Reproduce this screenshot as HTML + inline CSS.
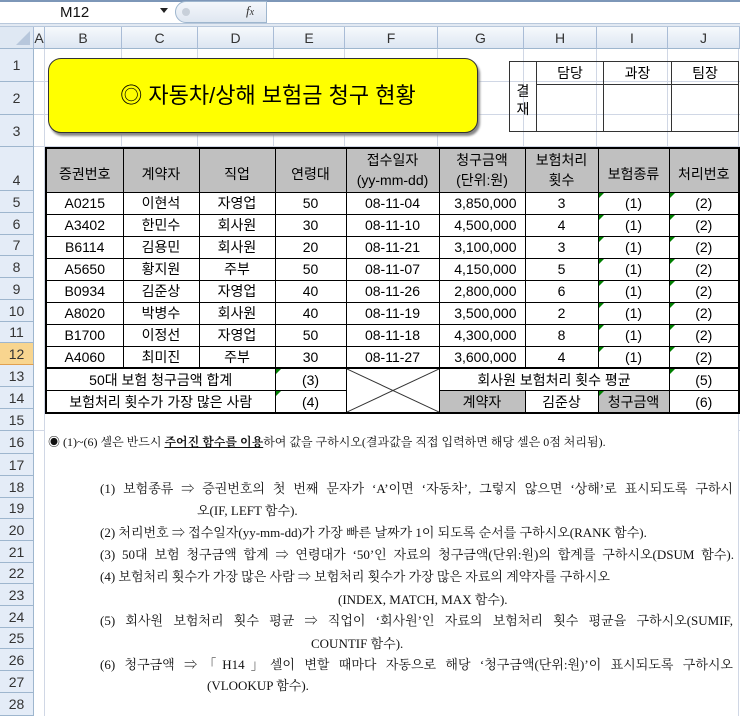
<!DOCTYPE html>
<html><head><meta charset="utf-8"><style>
*{margin:0;padding:0;box-sizing:border-box}
body{width:740px;height:716px;overflow:hidden;background:#fff;position:relative;font-family:"Liberation Sans","Noto Sans CJK KR",sans-serif;color:#000}
.a{position:absolute}
.vl{position:absolute;width:1px;background:#d0d7e5}
.hl{position:absolute;height:1px;background:#d0d7e5}
.ch{position:absolute;top:27px;height:22px;font-size:14px;color:#333;text-align:center;line-height:22px;background:linear-gradient(#f6f9fc,#dde6f2);border-right:1px solid #a9bcd6;border-bottom:1px solid #9eb6ce}
.rh{position:absolute;left:0;width:34px;font-size:14px;color:#333;text-align:center;background:#e4ecf7;border-bottom:1px solid #9eb6ce;border-right:1px solid #9eb6ce;display:flex;align-items:center;justify-content:center}
table.m{position:absolute;left:45px;top:147px;border-collapse:collapse;font-size:14px;background:#fff}
table.m td{border:1px solid #000;text-align:center;padding:0;height:22px;line-height:20px;position:relative;white-space:nowrap}
table.m{border:2px solid #000}
.g{background:#c0c0c0}
.tri::before{content:"";position:absolute;left:0;top:0;border-top:5px solid #008000;border-right:5px solid transparent}
.t{position:absolute;font-family:"Liberation Serif","Noto Serif CJK KR","Noto Serif CJK SC",serif;font-size:13px;white-space:nowrap;color:#111}
.j{text-align:justify;text-align-last:justify}
</style></head><body>
<!-- formula bar -->
<div class="a" style="left:0;top:0;width:740px;height:2px;background:#7d97b8"></div>
<div class="a" style="left:0;top:2px;width:740px;height:22px;background:#fff"></div>
<div class="a" style="left:60px;top:4px;font-size:15px;color:#111">M12</div>
<div class="a" style="left:160px;top:8px;border-top:5px solid #222;border-left:4px solid transparent;border-right:4px solid transparent"></div>
<div class="a" style="left:175px;top:1px;width:92px;height:22px;border:1px solid #9eb6ce;border-radius:11px 0 0 11px;background:linear-gradient(#f4f7fb,#dfe7f1)"></div>
<div class="a" style="left:182px;top:8px;width:8px;height:8px;border-radius:50%;background:#c8d0da"></div>
<div class="a" style="left:246px;top:3px;font-size:13px;font-style:italic;font-family:'Liberation Serif',serif;color:#333">f<span style="font-size:10px">x</span></div>
<div class="a" style="left:0;top:23px;width:740px;height:4px;background:#e2e9f2;border-top:1px solid #b8c8dc;border-bottom:1px solid #b8c8dc"></div>
<!-- grid lines -->
<div class="vl" style="left:44px;top:49px;height:667px"></div>
<div class="vl" style="left:121px;top:49px;height:100px"></div>
<div class="vl" style="left:197px;top:49px;height:100px"></div>
<div class="vl" style="left:273px;top:49px;height:100px"></div>
<div class="vl" style="left:344px;top:49px;height:100px"></div>
<div class="vl" style="left:437px;top:49px;height:100px"></div>
<div class="vl" style="left:523px;top:49px;height:100px"></div>
<div class="vl" style="left:596px;top:49px;height:100px"></div>
<div class="vl" style="left:667px;top:49px;height:100px"></div>
<div class="vl" style="left:738px;top:49px;height:667px"></div>
<div class="hl" style="left:34px;top:81px;width:706px"></div>
<div class="hl" style="left:34px;top:114px;width:706px"></div>
<div class="hl" style="left:34px;top:146px;width:706px"></div>
<div class="hl" style="left:34px;top:430px;width:706px"></div>
<!-- col headers -->
<div class="ch" style="left:0;width:34px;background:#dfe8f3"><div class="a" style="right:3px;bottom:3px;border-bottom:14px solid #b7c7dc;border-left:14px solid transparent"></div></div>
<div class="ch" style="left:34px;width:11px">A</div>
<div class="ch" style="left:45px;width:77px">B</div>
<div class="ch" style="left:122px;width:76px">C</div>
<div class="ch" style="left:198px;width:76px">D</div>
<div class="ch" style="left:274px;width:71px">E</div>
<div class="ch" style="left:345px;width:93px">F</div>
<div class="ch" style="left:438px;width:86px">G</div>
<div class="ch" style="left:524px;width:73px">H</div>
<div class="ch" style="left:597px;width:71px">I</div>
<div class="ch" style="left:668px;width:72px">J</div>
<!-- row headers -->
<div class="rh" style="top:49px;height:33px">1</div>
<div class="rh" style="top:82px;height:33px">2</div>
<div class="rh" style="top:115px;height:32px">3</div>
<div class="rh" style="top:147px;height:44px;align-items:flex-end;padding-bottom:2px">4</div>
<div class="rh" style="top:191px;height:22px">5</div>
<div class="rh" style="top:213px;height:22px">6</div>
<div class="rh" style="top:235px;height:21px">7</div>
<div class="rh" style="top:256px;height:22px">8</div>
<div class="rh" style="top:278px;height:22px">9</div>
<div class="rh" style="top:300px;height:22px">10</div>
<div class="rh" style="top:322px;height:21px">11</div>
<div class="rh" style="top:343px;height:22px;background:#f8d58f;border-bottom-color:#e0a050">12</div>
<div class="rh" style="top:365px;height:22px">13</div>
<div class="rh" style="top:387px;height:22px">14</div>
<div class="rh" style="top:409px;height:22px">15</div>
<div class="rh" style="top:431px;height:23px">16</div>
<div class="rh" style="top:454px;height:22px">17</div>
<div class="rh" style="top:476px;height:22px">18</div>
<div class="rh" style="top:498px;height:21px">19</div>
<div class="rh" style="top:519px;height:22px">20</div>
<div class="rh" style="top:541px;height:22px">21</div>
<div class="rh" style="top:563px;height:21px">22</div>
<div class="rh" style="top:584px;height:22px">23</div>
<div class="rh" style="top:606px;height:22px">24</div>
<div class="rh" style="top:628px;height:21px">25</div>
<div class="rh" style="top:649px;height:22px">26</div>
<div class="rh" style="top:671px;height:22px">27</div>
<div class="rh" style="top:693px;height:23px">28</div>
<!-- title box -->
<div class="a" style="left:48px;top:58px;width:430px;height:75px;background:#ffff00;border:1px solid #333;border-radius:13px;box-shadow:2px 3px 2px #888;font-family:'Liberation Sans','Noto Sans CJK KR',sans-serif;font-size:22px;text-align:center;line-height:73px;padding-left:10px">◎ 자동차/상해 보험금 청구 현황</div>
<!-- approval -->
<table style="position:absolute;left:509px;top:61px;border-collapse:collapse;font-size:14px;background:transparent">
<tr style="height:23px"><td rowspan="2" style="width:27px;border:1px solid #333;text-align:center;line-height:18px;padding-top:6px">결<br>재</td><td style="width:67px;border:1px solid #333;text-align:center">담당</td><td style="width:68px;border:1px solid #333;text-align:center">과장</td><td style="width:67px;border:1px solid #333;text-align:center">팀장</td></tr>
<tr style="height:47px"><td style="border:1px solid #333"></td><td style="border:1px solid #333"></td><td style="border:1px solid #333"></td></tr>
</table>
<!-- main table -->
<table class="m">
<colgroup><col style="width:77px"><col style="width:76px"><col style="width:76px"><col style="width:71px"><col style="width:93px"><col style="width:86px"><col style="width:73px"><col style="width:71px"><col style="width:70px"></colgroup>
<tr style="height:44px" class="g"><td class="g" style="padding-top:8px">증권번호</td><td class="g" style="padding-top:8px">계약자</td><td class="g" style="padding-top:8px">직업</td><td class="g" style="padding-top:8px">연령대</td><td class="g">접수일자<br>(yy-mm-dd)</td><td class="g">청구금액<br>(단위:원)</td><td class="g">보험처리<br>횟수</td><td class="g" style="padding-top:8px">보험종류</td><td class="g" style="padding-top:8px">처리번호</td></tr>
<tr><td>A0215</td><td>이현석</td><td>자영업</td><td>50</td><td>08-11-04</td><td style="text-align:right;padding-right:8px">3,850,000</td><td>3</td><td class="tri">(1)</td><td class="tri">(2)</td></tr>
<tr><td>A3402</td><td>한민수</td><td>회사원</td><td>30</td><td>08-11-10</td><td style="text-align:right;padding-right:8px">4,500,000</td><td>4</td><td class="tri">(1)</td><td class="tri">(2)</td></tr>
<tr><td>B6114</td><td>김용민</td><td>회사원</td><td>20</td><td>08-11-21</td><td style="text-align:right;padding-right:8px">3,100,000</td><td>3</td><td class="tri">(1)</td><td class="tri">(2)</td></tr>
<tr><td>A5650</td><td>황지원</td><td>주부</td><td>50</td><td>08-11-07</td><td style="text-align:right;padding-right:8px">4,150,000</td><td>5</td><td class="tri">(1)</td><td class="tri">(2)</td></tr>
<tr><td>B0934</td><td>김준상</td><td>자영업</td><td>40</td><td>08-11-26</td><td style="text-align:right;padding-right:8px">2,800,000</td><td>6</td><td class="tri">(1)</td><td class="tri">(2)</td></tr>
<tr><td>A8020</td><td>박병수</td><td>회사원</td><td>40</td><td>08-11-19</td><td style="text-align:right;padding-right:8px">3,500,000</td><td>2</td><td class="tri">(1)</td><td class="tri">(2)</td></tr>
<tr><td>B1700</td><td>이정선</td><td>자영업</td><td>50</td><td>08-11-18</td><td style="text-align:right;padding-right:8px">4,300,000</td><td>8</td><td class="tri">(1)</td><td class="tri">(2)</td></tr>
<tr><td>A4060</td><td>최미진</td><td>주부</td><td>30</td><td>08-11-27</td><td style="text-align:right;padding-right:8px">3,600,000</td><td>4</td><td class="tri">(1)</td><td class="tri">(2)</td></tr>
<tr style="border-top:2px solid #000"><td colspan="3">50대 보험 청구금액 합계</td><td class="tri">(3)</td><td rowspan="2" style="padding:0"><svg width="92" height="43" style="display:block"><line x1="0" y1="0" x2="92" y2="43" stroke="#333"/><line x1="92" y1="0" x2="0" y2="43" stroke="#333"/></svg></td><td colspan="3">회사원 보험처리 횟수 평균</td><td class="tri">(5)</td></tr>
<tr><td colspan="3">보험처리 횟수가 가장 많은 사람</td><td class="tri">(4)</td><td class="g">계약자</td><td>김준상</td><td class="g tri">청구금액</td><td>(6)</td></tr>
</table>
<!-- instructions image region -->
<div class="a" style="left:45px;top:429px;width:693px;height:287px;background:#fff"></div>
<div class="t" style="left:48px;top:433px;font-size:12px">◉ (1)~(6) 셀은 반드시 <b style="text-decoration:underline">주어진 함수를 이용</b>하여 값을 구하시오(결과값을 직접 입력하면 해당 셀은 0점 처리됨).</div>
<div class="t j" style="left:100px;top:478px;width:633px">(1) 보험종류 ⇒ 증권번호의 첫 번째 문자가 ‘A’이면 ‘자동차’, 그렇지 않으면 ‘상해’로 표시되도록 구하시</div>
<div class="t" style="left:197px;top:500px">오(IF, LEFT 함수).</div>
<div class="t" style="left:100px;top:522px">(2) 처리번호 ⇒ 접수일자(yy-mm-dd)가 가장 빠른 날짜가 1이 되도록 순서를 구하시오(RANK 함수).</div>
<div class="t j" style="left:100px;top:544px;width:634px">(3) 50대 보험 청구금액 합계 ⇒ 연령대가 ‘50’인 자료의 청구금액(단위:원)의 합계를 구하시오(DSUM 함수).</div>
<div class="t" style="left:100px;top:566px">(4) 보험처리 횟수가 가장 많은 사람 ⇒ 보험처리 횟수가 가장 많은 자료의 계약자를 구하시오</div>
<div class="t" style="left:338px;top:589px">(INDEX, MATCH, MAX 함수).</div>
<div class="t j" style="left:100px;top:610px;width:633px">(5) 회사원 보험처리 횟수 평균 ⇒ 직업이 ‘회사원’인 자료의 보험처리 횟수 평균을 구하시오(SUMIF,</div>
<div class="t" style="left:311px;top:633px">COUNTIF 함수).</div>
<div class="t j" style="left:100px;top:654px;width:633px">(6) 청구금액 ⇒「H14」셀이 변할 때마다 자동으로 해당 ‘청구금액(단위:원)’이 표시되도록 구하시오</div>
<div class="t" style="left:207px;top:675px">(VLOOKUP 함수).</div>
</body></html>
